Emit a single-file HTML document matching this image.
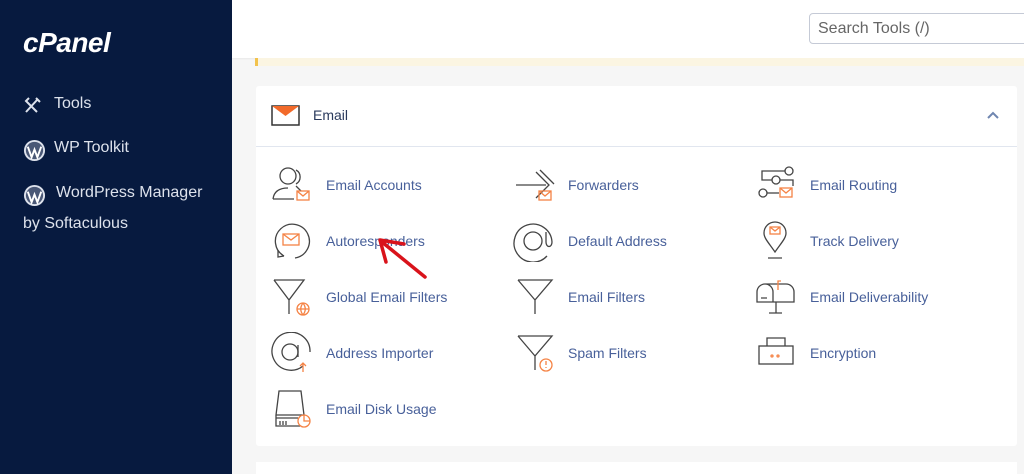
<!DOCTYPE html>
<html style="overflow:hidden;width:1024px;height:474px"><head><meta charset="utf-8"><style>
*{margin:0;padding:0;box-sizing:border-box}
body{width:1024px;height:474px;overflow:hidden;background:#f6f6f6;font-family:"Liberation Sans",sans-serif;position:relative}
.side{position:absolute;left:0;top:0;width:232px;height:474px;background:#071a3f;color:#dfe3ec}
.logo{position:absolute;left:23px;top:27px;font:italic bold 28px "Liberation Sans",sans-serif;color:#fff;letter-spacing:-0.5px}
.nav{position:absolute;left:23px;font-size:16px;color:#dde2ec}
.nav svg{position:absolute;left:0;top:0}
.top{position:absolute;left:232px;top:0;width:792px;height:58px;background:#fff;box-shadow:0 1px 2px rgba(0,0,0,.06)}
.search{position:absolute;left:809px;top:13px;width:230px;height:31px;border:1px solid #c5cad6;border-radius:4px;background:#fff;font-size:16px;color:#666;padding:6px 8px}
.alert{position:absolute;left:255px;top:58px;width:769px;height:8px;background:#fbf5e2;border-left:3px solid #f2c24c}
.card{position:absolute;left:256px;top:86px;width:761px;height:360px;background:#fff;border-radius:3px}
.card2{position:absolute;left:256px;top:462px;width:761px;height:12px;background:#fff}
.hdr{position:absolute;left:256px;top:146px;width:761px;height:1px;background:#e1e6ef}
.t{position:absolute;font-size:14px;color:#48609a}
.i{position:absolute;width:42px;height:42px}
</style></head><body>
<div class="side">
<div class="logo">cPanel</div>
<div class="nav" style="top:95px"><svg width="20" height="20" viewBox="0 0 20 20" stroke="#dde2ec" stroke-width="2" fill="none"><path d="M3 17L14 5M13 3l4 4M6 3l-3 3 11 11"/></svg><span style="margin-left:31px">Tools</span></div>
<div class="nav" style="top:139px"><svg width="23" height="23" viewBox="0 0 24 24"><circle cx="12" cy="12" r="11" fill="#dde2ec"/><circle cx="12" cy="12" r="9" fill="#4a5876"/><path d="M5 8l4 11 3-8 3 8 4-11" stroke="#fff" stroke-width="2" fill="none"/></svg><span style="margin-left:31px">WP Toolkit</span></div>
<div class="nav" style="top:184px"><svg width="23" height="23" viewBox="0 0 24 24"><circle cx="12" cy="12" r="11" fill="#dde2ec"/><circle cx="12" cy="12" r="9" fill="#4a5876"/><path d="M5 8l4 11 3-8 3 8 4-11" stroke="#fff" stroke-width="2" fill="none"/></svg><span style="margin-left:33px">WordPress Manager</span></div>
<div class="nav" style="top:215px">by Softaculous</div>
</div>
<div class="top"></div>
<div class="search">Search Tools (/)</div>
<div class="alert"></div>
<div class="card"></div>
<div class="card2"></div>
<div class="hdr"></div>
<svg style="position:absolute;left:271px;top:105px" width="29" height="22" viewBox="0 0 29 22"><rect x="1" y="1" width="27" height="19" fill="#fff" stroke="#333" stroke-width="1.5"/><path d="M1 1h27l-13.5 10z" fill="#f26a2a"/></svg>
<div class="t" style="left:313px;top:107px;color:#2a3a5c">Email</div>
<svg style="position:absolute;left:987px;top:111px" width="12" height="8" viewBox="0 0 12 8"><path d="M1 7l5-5 5 5" stroke="#6f86b0" stroke-width="2" fill="none"/></svg>

<svg class="i" style="left:270px;top:164px" viewBox="0 0 42 42" fill="none" stroke="#444" stroke-width="1.3"><circle cx="18" cy="12" r="8"/><path d="M26 6a8 8 0 0 1 0 14M3 35c1-8 7-11 15-11M26 22l5 5"/><path d="M3 35h21"/><rect x="27" y="27" width="12" height="9" stroke="#f58345"/><path d="M27 27l6 5 6-5" stroke="#f58345"/></svg>
<div class="t" style="left:326px;top:177px">Email Accounts</div>
<svg class="i" style="left:270px;top:220px" viewBox="0 0 42 42" fill="none" stroke="#444" stroke-width="1.3"><path d="M14 36A17 17 0 1 1 25 38"/><path d="M8 30l0 7 6-1"/><rect x="13" y="14" width="16" height="11" stroke="#f58345"/><path d="M13 14l8 6 8-6" stroke="#f58345"/></svg>
<div class="t" style="left:326px;top:233px">Autoresponders</div>
<svg class="i" style="left:270px;top:276px" viewBox="0 0 42 42" fill="none" stroke="#444" stroke-width="1.3"><path d="M4 4h30L19 24v14M4 4l15 20"/><circle cx="33" cy="33" r="6" stroke="#f58345"/><path d="M27 33h12M33 27c-3 4-3 8 0 12M33 27c3 4 3 8 0 12" stroke="#f58345"/></svg>
<div class="t" style="left:326px;top:289px">Global Email Filters</div>
<svg class="i" style="left:270px;top:332px" viewBox="0 0 42 42" fill="none" stroke="#444" stroke-width="1.3"><path d="M33 34A19 19 0 1 1 40 20"/><circle cx="20" cy="20" r="8"/><path d="M28 13v12"/><path d="M33 40v-9M30 34l3-3 3 3" stroke="#f58345"/></svg>
<div class="t" style="left:326px;top:345px">Address Importer</div>
<svg class="i" style="left:270px;top:388px" viewBox="0 0 42 42" fill="none" stroke="#444" stroke-width="1.3"><path d="M9 3h22l3 24H6zM6 27v11h24M6 30h22M10 33v4M13 33v4M16 33v4"/><circle cx="34" cy="33" r="6" stroke="#f58345"/><path d="M34 27v6h6" stroke="#f58345"/></svg>
<div class="t" style="left:326px;top:401px">Email Disk Usage</div>

<svg class="i" style="left:514px;top:164px" viewBox="0 0 42 42" fill="none" stroke="#444" stroke-width="1.3"><path d="M2 21h30M22 8l13 13-13 13M26 6l14 14"/><rect x="25" y="27" width="12" height="9" stroke="#f58345"/><path d="M25 27l6 5 6-5" stroke="#f58345"/></svg>
<div class="t" style="left:568px;top:177px">Forwarders</div>
<svg class="i" style="left:512px;top:220px" viewBox="0 0 42 42" fill="none" stroke="#444" stroke-width="1.3"><path d="M35 36A19 19 0 1 1 40 22c0 6-6 6-6 0V12"/><circle cx="21" cy="21" r="9"/></svg>
<div class="t" style="left:568px;top:233px">Default Address</div>
<svg class="i" style="left:514px;top:276px" viewBox="0 0 42 42" fill="none" stroke="#444" stroke-width="1.3"><path d="M4 4h34L21 24v14M4 4l17 20"/></svg>
<div class="t" style="left:568px;top:289px">Email Filters</div>
<svg class="i" style="left:514px;top:332px" viewBox="0 0 42 42" fill="none" stroke="#444" stroke-width="1.3"><path d="M4 4h34L21 24v14M4 4l17 20"/><circle cx="32" cy="33" r="6" stroke="#f58345"/><path d="M32 29v4M32 35v1" stroke="#f58345"/></svg>
<div class="t" style="left:568px;top:345px">Spam Filters</div>

<svg class="i" style="left:756px;top:164px" viewBox="0 0 42 42" fill="none" stroke="#444" stroke-width="1.3"><circle cx="33" cy="7" r="4"/><path d="M29 7H6v9h10"/><circle cx="20" cy="16" r="4"/><path d="M24 16h13v6"/><circle cx="7" cy="29" r="4"/><path d="M11 29h12"/><rect x="24" y="24" width="12" height="9" stroke="#f58345"/><path d="M24 24l6 5 6-5" stroke="#f58345"/></svg>
<div class="t" style="left:810px;top:177px">Email Routing</div>
<svg class="i" style="left:754px;top:220px" viewBox="0 0 42 42" fill="none" stroke="#444" stroke-width="1.3"><path d="M21 32C14 22 10 18 10 13a11 11 0 0 1 22 0c0 5-4 9-11 19zM14 38h14"/><rect x="16" y="7" width="10" height="7" stroke="#f58345"/><path d="M16 7l5 4 5-4" stroke="#f58345"/></svg>
<div class="t" style="left:810px;top:233px">Track Delivery</div>
<svg class="i" style="left:754px;top:276px" viewBox="0 0 42 42" fill="none" stroke="#444" stroke-width="1.3"><path d="M3 26V16a8 8 0 0 1 16 0v10zM19 26h21V16a8 8 0 0 0-8-8H11M22 26v11M15 37h13M7 22h6"/><path d="M24 14V5h3" stroke="#f58345"/></svg>
<div class="t" style="left:810px;top:289px">Email Deliverability</div>
<svg class="i" style="left:756px;top:332px" viewBox="0 0 42 42" fill="none" stroke="#444" stroke-width="1.3"><path d="M11 14V6h18v8"/><rect x="3" y="14" width="34" height="18"/><circle cx="16" cy="24" r="1" stroke="#f58345"/><circle cx="22" cy="24" r="1" stroke="#f58345"/></svg>
<div class="t" style="left:810px;top:345px">Encryption</div>

<svg style="position:absolute;left:370px;top:232px" width="64" height="52" viewBox="0 0 64 52" fill="none" stroke="#d9131b" stroke-width="3.5" stroke-linecap="round"><path d="M55 45L12 10M10 8l24 4M10 8l6 22"/></svg>
</body></html>
